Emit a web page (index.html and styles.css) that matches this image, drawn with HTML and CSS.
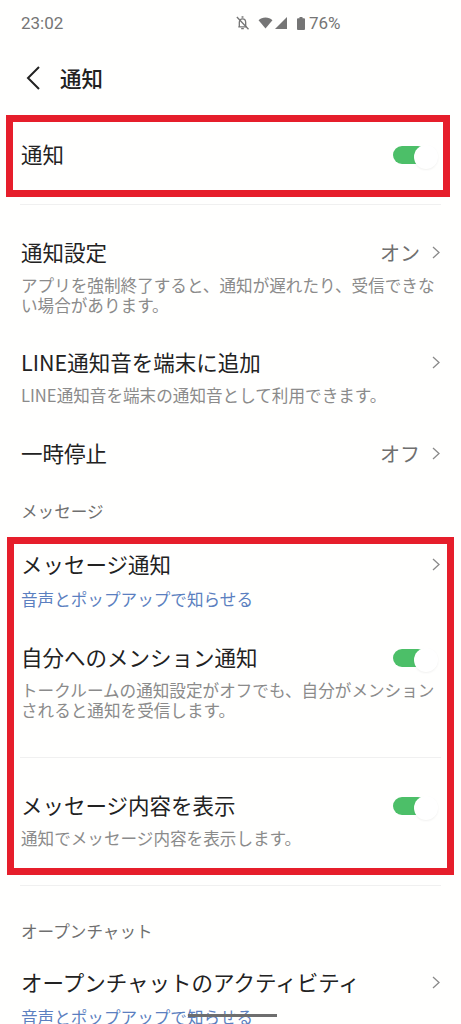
FILE: index.html
```html
<!DOCTYPE html>
<html lang="ja">
<head>
<meta charset="utf-8">
<title>通知</title>
<link rel="stylesheet" href="styles.css">
</head>
<body>
<div class="page">
  <div class="status">
    <span class="time">23:02</span>
    <div class="status-icons">
      <svg class="ic-bell" viewBox="0 0 16 16" width="15" height="16"><path d="M3.500 12.200h8.800M4.600 12V7.400c0-2.200 1.300-3.900 3.400-3.900s3.400 1.700 3.400 3.900V12M7 1.600h2M6.600 14h2.800" fill="none" stroke="#757575" stroke-width="1.400"/><path d="M2 1.600l12.400 13" stroke="#757575" stroke-width="1.400"/></svg>
      <svg class="ic-wifi" viewBox="0 0 16 13" width="15" height="12"><path d="M0.500 3.600C2.500 1.600 5 .6 8 .6s5.500 1 7.500 3L8 12.400z" fill="#757575"/></svg>
      <svg class="ic-signal" viewBox="0 0 12 12" width="12" height="12"><path d="M12 0v12H0z" fill="#757575"/></svg>
      <svg class="ic-batt" viewBox="0 0 8 13" width="8" height="13"><path d="M2.500 0h3v1.200H7a1 1 0 0 1 1 1V12a1 1 0 0 1-1 1H1a1 1 0 0 1-1-1V2.200a1 1 0 0 1 1-1h1.500z" fill="#757575"/></svg>
      <span class="pct">76%</span>
    </div>
  </div>

  <header class="bar">
    <svg class="back" viewBox="0 0 16 24" width="16" height="24"><path d="M14 1 3 12l11 11" fill="none" stroke="#222" stroke-width="2"/></svg>
    <h1 class="bar-title">通知</h1>
  </header>

  <section class="row row-main">
    <div class="line"><span class="label">通知</span><span class="toggle"></span></div>
  </section>
  <hr class="rule rule-a">

  <section class="row row-setting">
    <div class="line"><span class="label">通知設定</span><span class="value">オン<svg class="chev" viewBox="0 0 8 13" width="8" height="13"><path d="M1 1l6 5.500-6 5.500" fill="none" stroke="#8a8a8a" stroke-width="1.300"/></svg></span></div>
    <p class="desc">アプリを強制終了すると、通知が遅れたり、受信できない場合があります。</p>
  </section>

  <section class="row row-add">
    <div class="line"><span class="label">LINE通知音を端末に追加</span><svg class="chev" viewBox="0 0 8 13" width="8" height="13"><path d="M1 1l6 5.500-6 5.500" fill="none" stroke="#8a8a8a" stroke-width="1.300"/></svg></div>
    <p class="desc">LINE通知音を端末の通知音として利用できます。</p>
  </section>

  <section class="row row-pause">
    <div class="line"><span class="label">一時停止</span><span class="value">オフ<svg class="chev" viewBox="0 0 8 13" width="8" height="13"><path d="M1 1l6 5.500-6 5.500" fill="none" stroke="#8a8a8a" stroke-width="1.300"/></svg></span></div>
  </section>

  <h2 class="section-head head-msg">メッセージ</h2>

  <section class="row row-msg">
    <div class="line"><span class="label">メッセージ通知</span><svg class="chev" viewBox="0 0 8 13" width="8" height="13"><path d="M1 1l6 5.500-6 5.500" fill="none" stroke="#8a8a8a" stroke-width="1.300"/></svg></div>
    <p class="link">音声とポップアップで知らせる</p>
  </section>

  <section class="row row-mention">
    <div class="line"><span class="label">自分へのメンション通知</span><span class="toggle"></span></div>
    <p class="desc">トークルームの通知設定がオフでも、自分がメンションされると通知を受信します。</p>
  </section>
  <hr class="rule rule-b">

  <section class="row row-content">
    <div class="line"><span class="label">メッセージ内容を表示</span><span class="toggle"></span></div>
    <p class="desc">通知でメッセージ内容を表示します。</p>
  </section>
  <hr class="rule rule-c">

  <h2 class="section-head head-open">オープンチャット</h2>

  <section class="row row-open">
    <div class="line"><span class="label">オープンチャットのアクティビティ</span><svg class="chev" viewBox="0 0 8 13" width="8" height="13"><path d="M1 1l6 5.500-6 5.500" fill="none" stroke="#8a8a8a" stroke-width="1.300"/></svg></div>
    <p class="link">音声とポップアップで知らせる</p>
  </section>

  <div class="mark mark-one"></div>
  <div class="mark mark-two"></div>
  <div class="gesture"></div>
</div>
</body>
</html>
```
FILE: styles.css
```css
* { box-sizing: border-box; }
html, body { margin: 0; padding: 0; background: #fff; }
body { font-family: "Noto Sans CJK JP", "Noto Sans", sans-serif; color: #222; }
.page { position: relative; width: 461px; height: 1024px; overflow: hidden; background: #fffffe; }

.status { height: 44px; padding: 2px 0 0 21px; display: flex; align-items: center; color: #757575; }
.time { font: 17px/20px Roboto, sans-serif; width: 214px; }
.status-icons { display: flex; align-items: center; }
.ic-bell { margin-right: 8px; }
.ic-wifi { margin-right: 2px; }
.ic-signal { margin-right: 10px; }
.ic-batt { margin-right: 4px; }
.pct { font: 17px/20px Roboto, sans-serif; }

.bar { height: 60px; padding: 7px 0 0 25px; display: flex; align-items: center; }
.back { margin-right: 19px; }
.bar-title { margin: 0; font-size: 21.500px; line-height: 30px; font-weight: 500; color: #222; }

.row { padding: 0 21px; }
.line { display: flex; justify-content: space-between; align-items: center; height: 30px; }
.label { font-size: 21.500px; line-height: 30px; color: #222; white-space: nowrap; }
.value { display: flex; align-items: center; gap: 12px; font-size: 20px; color: #6f6f6f; }
.chev { flex: none; }
.desc { margin: 8px 0 0; font-size: 16.600px; line-height: 20px; color: #8b8b8b; }
.link { margin: 10px 0 0; font-size: 16.600px; line-height: 20px; color: #5b7fc0; }

.toggle { position: relative; width: 44px; height: 22px; margin: 6px 3px 0 0; flex: none; }
.toggle::before { content: ""; position: absolute; left: 0; top: 0; width: 34px; height: 18px; background: #4cbf68; border-radius: 9px; }
.toggle::after { content: ""; position: absolute; right: 0; top: 0; width: 22px; height: 22px; border-radius: 50%; background: #fff; box-shadow: 0 0 0 1px #fff, 0 1px 3px rgba(0,0,0,.12); }

.rule { margin: 0 20px; border: 0; border-top: 1px solid #f0f0f0; height: 0; }

.row-main { padding-top: 35px; }
.rule-a { margin-top: 35px; }
.row-setting { padding-top: 32px; }
.row-add { padding-top: 32px; }
.row-pause { padding-top: 33px; }
.section-head { margin: 0; padding: 0 21px; font-size: 16.600px; line-height: 20px; font-weight: 400; color: #6f6f6f; }
.head-msg { margin-top: 33px; }
.row-msg { padding-top: 28px; }
.row-mention { padding-top: 33px; }
.rule-b { margin-top: 37px; }
.row-content { padding-top: 32px; }
.rule-c { margin-top: 37px; }
.head-open { margin-top: 35px; }
.row-open { padding-top: 26px; }

.mark { position: absolute; border: 7px solid #e61e2b; }
.mark-one { left: 6px; top: 115px; width: 444px; height: 82px; }
.mark-two { left: 7px; top: 537px; width: 447px; height: 338px; }
.gesture { position: absolute; left: 188px; top: 1014px; width: 89px; height: 3px; background: #6e6e6e; }
```
